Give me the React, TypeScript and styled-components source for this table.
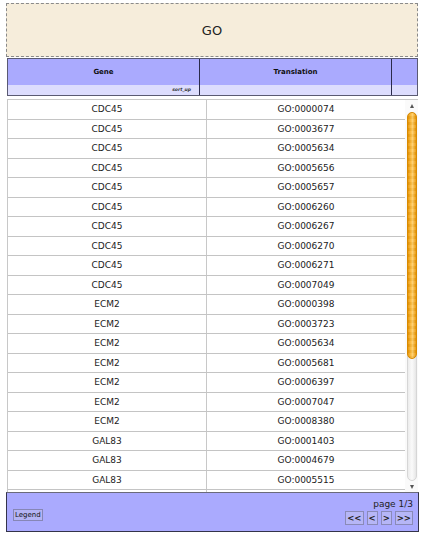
import React from "react";
import styled, { createGlobalStyle } from "styled-components";

const Global = createGlobalStyle`
  html, body { margin: 0; padding: 0; background: #fff; }
  body { font-family: "DejaVu Sans", Verdana, sans-serif; color: #222; }
`;

const Page = styled.div`
  width: 427px;
  height: 539px;
  overflow: hidden;
  padding: 3px 0 0 6px;
  box-sizing: border-box;
`;

const TitleBox = styled.div`
  width: 412px;
  height: 54px;
  box-sizing: border-box;
  border: 1px dashed #8a8a8a;
  background: #f6eddb;
  display: flex;
  align-items: center;
  justify-content: center;
  font-size: 13px;
  color: #222;
`;

const HeadTable = styled.div`
  margin: 1px 0 0 1px;
  width: 411px;
  box-sizing: border-box;
  border: 1px solid #5a5a72;
  display: grid;
  grid-template-columns: 192px 192px 1fr;
`;

const HeadCell = styled.div<{ $last?: boolean }>`
  border-right: ${(p) => (p.$last ? "none" : "1px solid #2a2a4a")};
  display: flex;
  flex-direction: column;
`;

const HeadLabel = styled.div`
  height: 26px;
  background: #aaaafe;
  display: flex;
  align-items: center;
  justify-content: center;
  font-size: 7px;
  font-weight: bold;
  color: #111;
`;

const HeadSort = styled.div`
  height: 10px;
  background: #dcdcfd;
  font-size: 4.5px;
  font-style: italic;
  font-weight: bold;
  color: #333;
  text-align: right;
  padding-right: 8px;
  line-height: 10px;
`;

const Body = styled.div`
  margin: 3px 0 0 1px;
  width: 411px;
  height: 393px;
  display: flex;
  box-sizing: border-box;
  border-left: 1px solid #c8c8c8;
  border-top: 1px solid #c8c8c8;
`;

const Rows = styled.div`
  width: 397px;
  overflow: hidden;
`;

const Row = styled.div`
  display: grid;
  grid-template-columns: 199px 1fr;
  height: 19.5px;
  box-sizing: border-box;
  border-bottom: 1px solid #c4c4c4;
  font-size: 9px;
  color: #222;
`;

const Cell = styled.div<{ $divider?: boolean }>`
  display: flex;
  align-items: center;
  justify-content: center;
  border-right: ${(p) => (p.$divider ? "1px solid #c8c8c8" : "none")};
`;

const Scroll = styled.div`
  width: 13px;
  background: #fafafa;
  display: flex;
  flex-direction: column;
  align-items: center;
`;

const Arrow = styled.div<{ $down?: boolean }>`
  width: 0;
  height: 0;
  border-left: 2.5px solid transparent;
  border-right: 2.5px solid transparent;
  ${(p) =>
    p.$down
      ? "border-top: 4px solid #555;"
      : "border-bottom: 4px solid #555;"}
  margin: ${(p) => (p.$down ? "4px 0 0 0" : "4px 0 4px 0")};
`;

const Track = styled.div`
  width: 10px;
  height: 369px;
  box-sizing: border-box;
  border: 1px solid #d6d6d6;
  border-radius: 5px;
  background: linear-gradient(to right, #ececec, #fafafa, #e6e6e6);
  position: relative;
`;

const Thumb = styled.div`
  position: absolute;
  left: -1px;
  top: -1px;
  width: 10px;
  height: 247px;
  border-radius: 5px;
  box-sizing: border-box;
  border: 1px solid #d98a00;
  background: repeating-linear-gradient(
      to bottom,
      rgba(255, 255, 255, 0.08) 0px,
      rgba(255, 255, 255, 0.08) 3px,
      rgba(0, 0, 0, 0.03) 3px,
      rgba(0, 0, 0, 0.03) 6px
    ),
    linear-gradient(to right, #e89400, #ffc24a 45%, #ffcf6a 55%, #e89400);
`;

const Footer = styled.div`
  width: 413px;
  height: 40px;
  box-sizing: border-box;
  border: 1px solid #34344a;
  border-top-color: #6a6a7a;
  background: #aaaafe;
  display: flex;
  align-items: center;
  justify-content: space-between;
  padding: 0 5px 0 6px;
`;

const LegendBtn = styled.div`
  margin-top: 6px;
  font-size: 7px;
  padding: 1px 1px;
  border: 1px solid #8686b6;
  background: #b4b4f4;
  color: #111;
`;

const Pager = styled.div`
  display: flex;
  flex-direction: column;
  align-items: flex-end;
  gap: 2px;
`;

const PageText = styled.div`
  font-size: 9px;
  color: #222;
`;

const Buttons = styled.div`
  display: flex;
  gap: 3px;
`;

const PBtn = styled.div`
  height: 14px;
  box-sizing: border-box;
  padding: 0 1px;
  border: 1px solid #8a8ab8;
  background: #b6b6f6;
  font-size: 8.5px;
  line-height: 12px;
  color: #222;
  font-weight: bold;
`;

const data: [string, string][] = [
  ["CDC45", "GO:0000074"],
  ["CDC45", "GO:0003677"],
  ["CDC45", "GO:0005634"],
  ["CDC45", "GO:0005656"],
  ["CDC45", "GO:0005657"],
  ["CDC45", "GO:0006260"],
  ["CDC45", "GO:0006267"],
  ["CDC45", "GO:0006270"],
  ["CDC45", "GO:0006271"],
  ["CDC45", "GO:0007049"],
  ["ECM2", "GO:0000398"],
  ["ECM2", "GO:0003723"],
  ["ECM2", "GO:0005634"],
  ["ECM2", "GO:0005681"],
  ["ECM2", "GO:0006397"],
  ["ECM2", "GO:0007047"],
  ["ECM2", "GO:0008380"],
  ["GAL83", "GO:0001403"],
  ["GAL83", "GO:0004679"],
  ["GAL83", "GO:0005515"],
  ["GAL83", "GO:0005634"],
];

export default function App() {
  return (
    <Page>
      <Global />
      <TitleBox>GO</TitleBox>
      <HeadTable>
        <HeadCell>
          <HeadLabel>Gene</HeadLabel>
          <HeadSort>sort_up</HeadSort>
        </HeadCell>
        <HeadCell>
          <HeadLabel>Translation</HeadLabel>
          <HeadSort />
        </HeadCell>
        <HeadCell $last>
          <HeadLabel />
          <HeadSort />
        </HeadCell>
      </HeadTable>
      <Body>
        <Rows>
          {data.map(([g, t], i) => (
            <Row key={i}>
              <Cell $divider>{g}</Cell>
              <Cell>{t}</Cell>
            </Row>
          ))}
        </Rows>
        <Scroll>
          <Arrow />
          <Track>
            <Thumb />
          </Track>
          <Arrow $down />
        </Scroll>
      </Body>
      <Footer>
        <LegendBtn>Legend</LegendBtn>
        <Pager>
          <PageText>page 1/3</PageText>
          <Buttons>
            <PBtn>&lt;&lt;</PBtn>
            <PBtn>&lt;</PBtn>
            <PBtn>&gt;</PBtn>
            <PBtn>&gt;&gt;</PBtn>
          </Buttons>
        </Pager>
      </Footer>
    </Page>
  );
}
